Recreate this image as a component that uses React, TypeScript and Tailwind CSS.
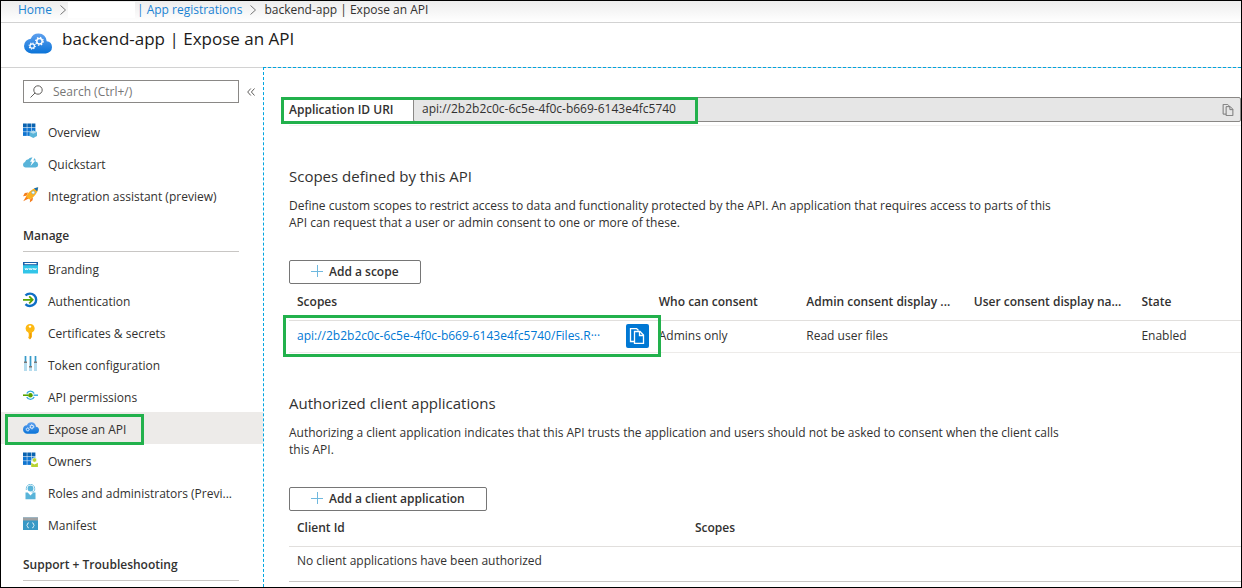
import type { ReactNode } from "react";

type NavItem = { label: string; icon: ReactNode; active?: boolean };

function Svg({ children }: { children: ReactNode }) {
  return (
    <svg viewBox="0 0 16 16" className="w-4 h-4 shrink-0" aria-hidden="true">
      {children}
    </svg>
  );
}

function GridSquares() {
  const cells = [0, 1, 2, 3, 4, 5, 6, 7];
  return (
    <>
      {cells.map((i) => (
        <rect key={i} x={(i % 3) * 4.3} y={0.5 + Math.floor(i / 3) * 4.3} width="3.8" height="3.8" fill={i < 3 ? "#0a63b0" : "#0f74d0"} />
      ))}
    </>
  );
}

function Gear({ cx, cy, r }: { cx: number; cy: number; r: number }) {
  return (
    <g fill="none" stroke="#fff">
      <circle cx={cx} cy={cy} r={r} strokeWidth={r * 0.55} />
      <circle cx={cx} cy={cy} r={r * 1.4} strokeWidth={r * 0.5} strokeDasharray={`${r * 0.5} ${r * 0.6}`} />
    </g>
  );
}

function CloudGears({ className }: { className: string }) {
  return (
    <svg viewBox="0 0 28 21" className={className} aria-hidden="true">
      <defs>
        <linearGradient id="cloud" x1="0" y1="0" x2="0" y2="1">
          <stop offset="0" stopColor="#5ea0ef" />
          <stop offset="1" stopColor="#0b74d8" />
        </linearGradient>
      </defs>
      <path
        d="M28 14.2a6 6 0 0 0-5.3-5.9A7.9 7.9 0 0 0 14.6.4 8.1 8.1 0 0 0 6.8 5.8 7.3 7.3 0 0 0 0 13a7.5 7.5 0 0 0 7.8 7.4h14A6.2 6.2 0 0 0 28 14.2z"
        fill="url(#cloud)"
      />
      <Gear cx={15.5} cy={8.3} r={2.7} />
      <Gear cx={8.2} cy={13} r={2.2} />
    </svg>
  );
}

function CopyIcon({ className }: { className: string }) {
  return (
    <svg viewBox="0 0 16 16" className={className} fill="none" stroke="currentColor" strokeWidth="1.3" aria-hidden="true">
      <path d="M5.5 13.5h-4v-13h6l2 2" />
      <path d="M5.5 3.5h5.5l3.500 3.500v8.500h-9z" />
      <path d="M10.5 3.5v4h4" />
    </svg>
  );
}

function PlusIcon() {
  return (
    <svg viewBox="0 0 12 12" className="w-3 h-3 mb-0.5" stroke="#6fb8de" fill="none" aria-hidden="true">
      <path d="M6.5 0v12M0 6.5h12" />
    </svg>
  );
}

function Chevron() {
  return (
    <svg viewBox="0 0 6 10" className="w-1.5 h-2.5" stroke="#777" fill="none" aria-hidden="true">
      <path d="M.5.5 5.5 5l-5 4.5" />
    </svg>
  );
}

const topItems: NavItem[] = [
  {
    label: "Overview",
    icon: (
      <Svg>
        <GridSquares />
        <path d="m10.3 7.5 3.7 1.6v4L10.3 15l-3.9-1.9v-4z" fill="#59b4d9" />
        <path d="m6.4 9.1 3.9 1.6L14 9.1l-3.7-1.6z" fill="#b5dcee" />
      </Svg>
    ),
  },
  {
    label: "Quickstart",
    icon: (
      <Svg>
        <path d="M15.2 9.800A3.200 3.200 0 0 0 12.600 6.600 3.600 3.600 0 0 0 9.500 2.600 3.800 3.800 0 0 0 5.400 4.300 3.700 3.700 0 0 0 2 7 2.900 2.900 0 0 0 0 9.800 3 3 0 0 0 3.300 12.500h9.300a2.800 2.800 0 0 0 2.600-2.700z" fill="#59b4d9" />
        <path d="M9.800 1.800 7 6.800h2L7.500 11l5-5.600h-2.300L12.200 2z" fill="#fff" />
      </Svg>
    ),
  },
  {
    label: "Integration assistant (preview)",
    icon: (
      <Svg>
        <path d="M5.200 5.500 1.800 6 0 9.300l3.500-.5zM10 10.200l-.4 3L6.800 15.500l.4-3.600z" fill="#f57f20" />
        <path d="M3.500 8.900.2 14.300l5.600-2.700z" fill="#f57f20" />
        <path d="M15.200.4C11 .6 5.400 4.200 3 9.500l3.200 3C11.400 10.200 15 5 15.200.4z" fill="#fdb022" />
        <path d="M15.200.2 11 1.300l3.200 3.200z" fill="#1370b8" />
        <circle cx="10.200" cy="5.500" r="1.500" fill="#fff" stroke="#59b4d9" strokeWidth=".6" />
      </Svg>
    ),
  },
];

const manageItems: NavItem[] = [
  {
    label: "Branding",
    icon: (
      <Svg>
        <path d="M0 2h15v11.500H0z" fill="#32c5e8" />
        <path d="M0 2h15v3.200H0z" fill="#1b5fa8" />
        <path d="M1.500 3h12v1.200h-12z" fill="#fff" />
        <path d="m2 8 .8 2 .8-1.600.8 1.600.8-2m.9 0 .8 2 .8-1.600.8 1.600.8-2m.9 0 .8 2 .8-1.600.8 1.600.8-2" fill="none" stroke="#fff" strokeWidth=".8" />
      </Svg>
    ),
  },
  {
    label: "Authentication",
    icon: (
      <Svg>
        <path d="M2.500 3.500A6.200 6.200 0 1 1 2.500 12.100" fill="none" stroke="#0f6fc6" strokeWidth="2.400" />
        <path d="M0 7.800h9M6.200 4.300 9.700 7.800l-3.500 3.500" fill="none" stroke="#57a300" strokeWidth="1.700" />
      </Svg>
    ),
  },
  {
    label: "Certificates & secrets",
    icon: (
      <Svg>
        <path d="M7 0a4.500 4.500 0 0 1 2 8.600V13l-2 2.500L5.300 14v-1.200l.9-.9-.9-.9.9-1-.9-.800v-.600A4.500 4.500 0 0 1 7 0z" fill="#fdb913" />
        <circle cx="7" cy="2.600" r="1.200" fill="#fff" />
        <path d="M6.800 9h1v5.200l-1 .8z" fill="#e58e12" />
      </Svg>
    ),
  },
  {
    label: "Token configuration",
    icon: (
      <Svg>
        <path d="M1 0h3v15H1zM6 0h3v15H6zM11 0h3v15h-3z" fill="#b5dcee" />
        <path d="M2 0h1v6H2zM7 0h1v10H7zM12 0h1v6h-1z" fill="#3999c6" />
        <path d="M1 5.500h3v1.500H1zM6 10h3v1.500H6zM11 5.500h3v1.500h-3z" fill="#7a7a7a" />
      </Svg>
    ),
  },
  {
    label: "API permissions",
    icon: (
      <Svg>
        <path d="M3.800 5.500a4 4 0 0 1 7.300 0M3.800 9a4 4 0 0 0 7.300 0" fill="none" stroke="#32a9dc" strokeWidth="1.400" />
        <path d="M0 7.200h5" stroke="#57a300" strokeWidth="1.600" />
        <circle cx="7.400" cy="7.200" r="2.300" fill="#57a300" />
        <path d="M10.500 7.200h4.500" stroke="#32a9dc" strokeWidth="1.400" />
      </Svg>
    ),
  },
  { label: "Expose an API", icon: <CloudGears className="w-4 h-3 shrink-0" />, active: true },
  {
    label: "Owners",
    icon: (
      <Svg>
        <GridSquares />
        <circle cx="11.500" cy="8" r="2.300" fill="#b8d432" stroke="#fff" strokeWidth=".7" />
        <path d="M8.200 10.800 11.500 12.500l3.400-1.700V15H8.200z" fill="#b8d432" />
      </Svg>
    ),
  },
  {
    label: "Roles and administrators (Previ...",
    icon: (
      <Svg>
        <circle cx="7.500" cy="4.500" r="2.900" fill="#59b4d9" />
        <path d="M3.300 6V4.500a4.200 4.200 0 0 1 8.400 0V6a3 3 0 0 1-3 2.200" fill="none" stroke="#7cc4e2" />
        <path d="M2.500 8.500h2.200l2.800 3 2.800-3h2.200v6.700h-10z" fill="#59b4d9" />
      </Svg>
    ),
  },
  {
    label: "Manifest",
    icon: (
      <Svg>
        <path d="M0 1.500h15V14H0z" fill="#3999c6" />
        <path d="M0 1.500h15v3H0z" fill="#a0a1a2" />
        <path d="M5.800 6.800q-1.300 0-1.300 1.200 0 1-.8 1.300.8.300.8 1.300 0 1.200 1.300 1.200M9.200 6.800q1.300 0 1.300 1.200 0 1 .8 1.300-.8.300-.8 1.300 0 1.200-1.300 1.200" fill="none" stroke="#fff" strokeWidth=".8" />
      </Svg>
    ),
  },
];

function NavList({ items }: { items: NavItem[] }) {
  return (
    <ul>
      {items.map((item) => (
        <li key={item.label} className={item.active ? "relative bg-[#edebe9]" : "relative"}>
          <a href="#" className="flex items-center h-8 gap-[9px] pl-[22px] whitespace-nowrap">
            {item.icon}
            <span className="pt-1">{item.label}</span>
          </a>
          {item.active && <div className="absolute left-1 top-0.5 w-[139px] h-[31px] border-3 border-[#22b14c] pointer-events-none" />}
        </li>
      ))}
    </ul>
  );
}

function NavHeading({ children }: { children: ReactNode }) {
  return <h2 className="ml-[22px] mr-6 h-[41px] pt-4 leading-[17px] font-semibold border-b border-[#c8c6c4]">{children}</h2>;
}

function AddButton({ children }: { children: ReactNode }) {
  return (
    <button type="button" className="mt-[29px] flex items-center h-6 gap-[6px] px-[21px] border border-[#767676] rounded-xs font-semibold whitespace-nowrap">
      <PlusIcon />
      {children}
    </button>
  );
}

export default function App() {
  return (
    <div className="min-h-screen flex flex-col border border-black bg-white font-['Open_Sans','Segoe_UI',sans-serif] text-xs text-[#323130]">
      <nav aria-label="Breadcrumb" className="flex items-center h-[22px] pl-[17px] pb-1 bg-linear-to-b from-[#ededed] to-white border-b border-[#d2d2d2] whitespace-nowrap">
        <a href="#" className="text-[#1a83d3] mr-2">Home</a>
        <Chevron />
        <span className="w-[67px] h-4 mx-0.5 bg-white" />
        <a href="#" className="text-[#1a83d3] mr-2">| App registrations</a>
        <Chevron />
        <span className="ml-2">backend-app | Expose an API</span>
      </nav>

      <header className="flex items-start h-[45px] pl-[23px] gap-[10px] border-b border-[#d2d2d2]">
        <CloudGears className="w-7 h-[21px] mt-[10px]" />
        <h1 className="mt-1 text-[17px] leading-6 font-medium text-[#1b1a19]">backend-app | Expose an API</h1>
      </header>

      <div className="flex flex-1">
        <aside className="w-[262px] shrink-0">
          <div className="flex items-center mt-3 mb-3 pl-[22px] gap-2">
            <label className="flex items-center w-[216px] h-[23px] px-1.5 gap-2 border border-[#8a8886]">
              <svg viewBox="0 0 13 13" className="w-[13px] h-[13px] shrink-0" fill="none" stroke="#605e5c" aria-hidden="true">
                <circle cx="8" cy="5" r="4.200" />
                <path d="M5 8 .5 12.500" />
              </svg>
              <input type="text" aria-label="Search" placeholder="Search (Ctrl+/)" className="w-full pl-0.5 outline-none placeholder:text-[#767676]" />
            </label>
            <button type="button" aria-label="Collapse menu">
              <svg viewBox="0 0 8 8" className="w-2 h-2" fill="none" stroke="#605e5c" aria-hidden="true">
                <path d="M3.800.5.700 4l3.100 3.500M7.500.500 4.400 4l3.100 3.500" />
              </svg>
            </button>
          </div>
          <NavList items={topItems} />
          <NavHeading>Manage</NavHeading>
          <NavList items={manageItems} />
          <NavHeading>Support + Troubleshooting</NavHeading>
        </aside>

        <main className="flex-1 min-w-0 -mt-px pt-[29px] pl-[25px] border-t border-l border-dashed border-[#00a5e0]">
          <div className="relative flex pb-0.5 border-b border-[#f3f2f1]">
            <label htmlFor="app-id-uri" className="w-[124px] shrink-0 leading-[26px] font-semibold">Application ID URI</label>
            <div className="flex flex-1 items-center h-[25px] pl-2 pr-1.5 bg-[#e6e6e6] border border-[#8a8886] rounded-xs">
              <input id="app-id-uri" type="text" readOnly value="api://2b2b2c0c-6c5e-4f0c-b669-6143e4fc5740" className="flex-1 pb-0.5 outline-none" />
              <button type="button" aria-label="Copy Application ID URI" className="text-[#767676]">
                <CopyIcon className="w-3 h-3" />
              </button>
            </div>
            <div className="absolute -left-2 top-0 w-[417px] h-[27px] border-3 border-[#22b14c] pointer-events-none" />
          </div>

          <section className="mt-[38px]">
            <h2 className="text-[15px] leading-6">Scopes defined by this API</h2>
            <p className="mt-[9px] max-w-[780px] leading-[17px]">
              Define custom scopes to restrict access to data and functionality protected by the API. An application that requires access to parts of this API can request that a user or admin consent to one or more of these.
            </p>
            <AddButton>Add a scope</AddButton>
            <table className="w-full table-fixed text-left whitespace-nowrap">
              <thead>
                <tr className="h-9 border-b border-[#e1dfdd]">
                  <th className="w-[38%] px-2 font-semibold">Scopes</th>
                  <th className="w-[15.5%] px-2 font-semibold">Who can consent</th>
                  <th className="w-[17.6%] px-2 font-semibold">Admin consent display ...</th>
                  <th className="w-[17.6%] px-2 font-semibold">User consent display na...</th>
                  <th className="px-2 font-semibold">State</th>
                </tr>
              </thead>
              <tbody>
                <tr className="h-8 border-b border-[#edebe9]">
                  <td className="relative pl-2 pr-0.5">
                    <div className="flex items-center justify-between">
                      <a href="#" className="text-[#0078d4]">api://2b2b2c0c-6c5e-4f0c-b669-6143e4fc5740/Files.R···</a>
                      <button type="button" aria-label="Copy scope" className="flex items-center justify-center w-[23px] h-6 rounded-xs bg-[#0078d4] text-white">
                        <CopyIcon className="w-4 h-4" />
                      </button>
                    </div>
                    <div className="absolute -left-1.5 -right-2.5 -top-1.5 h-[42px] border-3 border-[#22b14c] pointer-events-none" />
                  </td>
                  <td className="px-2">Admins only</td>
                  <td className="px-2">Read user files</td>
                  <td className="px-2" />
                  <td className="px-2">Enabled</td>
                </tr>
              </tbody>
            </table>
          </section>

          <section className="mt-[38px]">
            <h2 className="text-[15px] leading-6">Authorized client applications</h2>
            <p className="mt-[9px] max-w-[780px] leading-[17px]">
              Authorizing a client application indicates that this API trusts the application and users should not be asked to consent when the client calls this API.
            </p>
            <AddButton>Add a client application</AddButton>
            <table className="w-full table-fixed text-left whitespace-nowrap">
              <thead>
                <tr className="h-9 border-b border-[#e1dfdd]">
                  <th className="w-[41.8%] px-2 font-semibold">Client Id</th>
                  <th className="px-2 font-semibold">Scopes</th>
                </tr>
              </thead>
              <tbody>
                <tr className="h-[35px] border-b border-[#c8c6c4]">
                  <td colSpan={2} className="px-2 pb-1.5">No client applications have been authorized</td>
                </tr>
              </tbody>
            </table>
          </section>
        </main>
      </div>
    </div>
  );
}
